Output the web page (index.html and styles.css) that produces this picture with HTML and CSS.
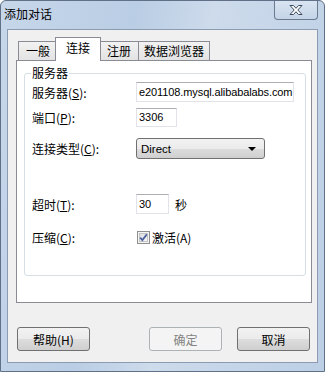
FILE: index.html
```html
<!DOCTYPE html>
<html lang="zh-CN">
  <head>
    <meta charset="UTF-8">
    <title>添加对话</title>
    <link rel="stylesheet" href="styles.css">
  </head>
  <body>
    <div class="window">
      <div class="titlebar">
        <div class="title">添加对话</div>
        <div class="close">
          <svg width="16" height="12" viewBox="0 0 16 12">
            <path d="M2 1.5h3.5L8 4.3l2.5-2.8H14L9.8 6 14 10.5h-3.5L8 7.7l-2.5 2.8H2L6.2 6z" fill="#fff" stroke="#3b4a5e" stroke-width="1" stroke-linejoin="round"/>
          </svg>
        </div>
      </div>
      <div class="client">
        <div class="tabs">
          <div class="tab">一般</div>
          <div class="tab active">连接</div>
          <div class="tab">注册</div>
          <div class="tab wide">数据浏览器</div>
        </div>
        <div class="panel">
          <fieldset class="group">
            <legend>服务器</legend>
            <div class="row first">
              <label for="host">服务器(<u>S</u>):</label>
              <input type="text" id="host" class="field host" value="e201108.mysql.alibabalabs.com">
            </div>
            <div class="row">
              <label for="port">端口(<u>P</u>):</label>
              <input type="text" id="port" class="field port" value="3306">
            </div>
            <div class="row combo-row">
              <label>连接类型(<u>C</u>):</label>
              <div class="combo">
                <span>Direct</span>
                <svg width="8" height="4" viewBox="0 0 8 4"><path d="M0 0h8L4 4z" fill="#000"/></svg>
              </div>
            </div>
            <div class="row timeout-row">
              <label for="timeout">超时(<u>T</u>):</label>
              <input type="text" id="timeout" class="field timeout" value="30">
              <span class="unit">秒</span>
            </div>
            <div class="row check-row">
              <label>压缩(<u>C</u>):</label>
              <span class="check">
                <svg width="13" height="13" viewBox="0 0 13 13">
                  <defs>
                    <linearGradient id="cb" x1="0" y1="0" x2="1" y2="1">
                      <stop offset="0" stop-color="#dcdcdc"/>
                      <stop offset="1" stop-color="#fbfbfb"/>
                    </linearGradient>
                  </defs>
                  <rect x="0.5" y="0.5" width="12" height="12" fill="#f4f4f4" stroke="#8e8f8f"/>
                  <rect x="2.5" y="2.5" width="8" height="8" fill="url(#cb)" stroke="#c4c4c4"/>
                  <path d="M3.2 6.6l2.2 2.4 4.4-5.6" fill="none" stroke="#4c61a0" stroke-width="1.8"/>
                </svg>
                激活(A)
              </span>
            </div>
          </fieldset>
        </div>
        <div class="buttons">
          <button class="btn">帮助(H)</button>
          <button class="btn ok" disabled>确定</button>
          <button class="btn cancel">取消</button>
        </div>
      </div>
    </div>
  </body>
</html>
```

FILE: styles.css
```css
body {
  margin: 0;
  font-family: "Noto Sans CJK SC", "Liberation Sans", sans-serif;
  font-size: 12px;
  color: #000;
}

.window {
  width: 325px;
  height: 372px;
  box-sizing: border-box;
  border: 1px solid #5f7087;
  border-radius: 6px 6px 0 0;
  background: linear-gradient(100deg, #c7d7ea 0%, #b9cde4 35%, #cddbeb 55%, #bccfe5 100%);
}

.titlebar {
  height: 28px;
  display: flex;
  justify-content: space-between;
  align-items: flex-start;
}

.title {
  padding: 5px 0 0 3px;
  font-size: 12px;
  line-height: 16px;
}

.close {
  width: 44px;
  height: 19px;
  margin-right: 6px;
  box-sizing: border-box;
  border: 1px solid #6a7a8f;
  border-top: 0;
  border-radius: 0 0 4px 4px;
  background: linear-gradient(#d9e4f1, #c4d4e7);
  display: flex;
  align-items: center;
  justify-content: center;
}

.client {
  margin: 0 6px 0 6px;
  height: 334px;
  box-sizing: border-box;
  border: 1px solid #8a9bb2;
  background: #f0f0f0;
  padding: 7px 0 0 8px;
}

.tabs {
  display: flex;
  align-items: flex-end;
  height: 23px;
  padding-left: 2px;
}

.tab {
  width: 40px;
  height: 19px;
  box-sizing: border-box;
  border: 1px solid #898c95;
  border-bottom: 0;
  margin-right: -1px;
  background: linear-gradient(#f2f2f2, #e3e3e3);
  text-align: center;
  line-height: 18px;
  font-size: 12px;
}

.tab.active {
  width: 46px;
  height: 24px;
  margin: 0 -2px -1px -2px;
  background: #fff;
  position: relative;
  z-index: 1;
  line-height: 20px;
  padding-bottom: 2px;
}

.tab.wide {
  width: 72px;
}

.panel {
  width: 296px;
  height: 243px;
  box-sizing: border-box;
  border: 1px solid #898c95;
  background: #fff;
  padding: 4px 0 0 7px;
}

.group {
  width: 282px;
  height: 211px;
  box-sizing: border-box;
  margin: 0;
  border: 1px solid #d5dfe5;
  border-radius: 3px;
  padding: 0 0 0 7px;
}

.group legend {
  padding: 0 1px;
  margin-left: -1px;
  line-height: 16px;
}

.row {
  display: flex;
  align-items: center;
  height: 20px;
  margin-top: 5px;
}

.row.first {
  margin-top: 1px;
}

.row.combo-row {
  margin-top: 11px;
  height: 21px;
}

.row.timeout-row {
  margin-top: 35px;
}

.row.check-row {
  margin-top: 13px;
}

.row label {
  width: 104px;
  flex: none;
}

.field {
  height: 20px;
  box-sizing: border-box;
  border: 1px solid #e2e3ea;
  border-top-color: #abadb3;
  padding: 0 0 0 2px;
  margin: 0;
  font-family: "Liberation Sans", sans-serif;
  font-size: 11px;
  color: #000;
  background: #fff;
}

.host {
  width: 158px;
  letter-spacing: -0.1px;
}

.port {
  width: 41px;
  height: 19px;
}

.timeout {
  width: 33px;
}

.unit {
  margin-left: 6px;
}

.combo {
  width: 129px;
  height: 21px;
  box-sizing: border-box;
  border: 1px solid #707070;
  border-radius: 3px;
  background: linear-gradient(#f2f2f2 0%, #ebebeb 50%, #dddddd 50%, #cfcfcf 100%);
  display: flex;
  align-items: center;
  justify-content: space-between;
  padding: 0 8px 0 4px;
  font-family: "Liberation Sans", sans-serif;
  font-size: 11.5px;
}

.check {
  display: flex;
  align-items: center;
  gap: 2px;
  margin-left: 1px;
}

.buttons {
  display: flex;
  margin-top: 24px;
  padding: 0 7px 0 1px;
}

.btn {
  width: 73px;
  height: 24px;
  box-sizing: border-box;
  border: 1px solid #707070;
  border-radius: 3px;
  background: linear-gradient(#f2f2f2 0%, #ebebeb 50%, #dddddd 50%, #cfcfcf 100%);
  font-family: inherit;
  font-size: 12px;
  color: #000;
  padding: 0;
  margin: 0;
}

.btn.ok {
  margin-left: auto;
  border-color: #adb2b5;
  background: #f4f4f4;
  color: #838383;
}

.btn.cancel {
  margin-left: 15px;
}
```
